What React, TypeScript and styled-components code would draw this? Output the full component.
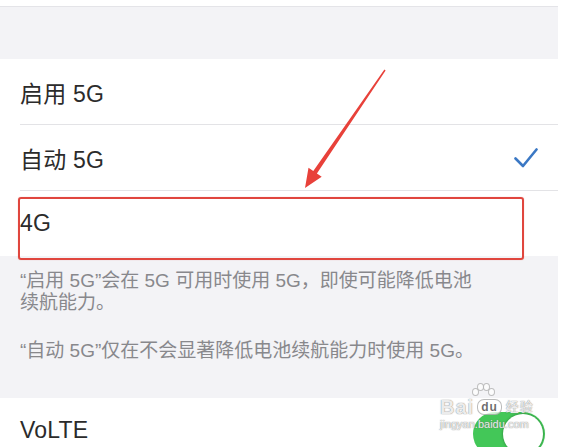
import React from "react";
import styled, { createGlobalStyle } from "styled-components";

const GlobalStyle = createGlobalStyle`
  html, body {
    margin: 0;
    padding: 0;
    background: #ffffff;
  }
  body {
    font-family: "Liberation Sans", "Noto Sans CJK SC", sans-serif;
    overflow: hidden;
  }
`;

interface Option {
  id: string;
  label: string;
  checked?: boolean;
  marked?: boolean;
}

const options: Option[] = [
  { id: "on", label: "启用 5G" },
  { id: "auto", label: "自动 5G", checked: true },
  { id: "4g", label: "4G", marked: true },
];

const notes = [
  "“启用 5G”会在 5G 可用时使用 5G，即使可能降低电池续航能力。",
  "“自动 5G”仅在不会显著降低电池续航能力时使用 5G。",
];

const CheckIcon = () => (
  <svg width="24" height="22" viewBox="0 0 24 22">
    <polyline
      points="1.5,11.5 9,19 22.5,2.5"
      fill="none"
      stroke="#3b78c4"
      strokeWidth="2.6"
      strokeLinecap="round"
      strokeLinejoin="round"
    />
  </svg>
);

const Arrow = () => (
  <ArrowLayer width="572" height="447" viewBox="0 0 572 447">
    <polygon
      points="385.6,70.4 316.9,173.4 321.7,176.7 305,188 308.5,167.7 313.3,170.9 384.4,69.6"
      fill="#e8413a"
    />
  </ArrowLayer>
);

export default function App() {
  return (
    <Page>
      <GlobalStyle />
      <Screen>
        <TopGap />
        <Group>
          {options.map((opt, i) => (
            <Row key={opt.id} last={i === options.length - 1}>
              <Label>{opt.label}</Label>
              {opt.checked && <CheckIcon />}
              {opt.marked && <Highlight />}
            </Row>
          ))}
        </Group>
        <Footer>
          {notes.map((n) => (
            <Note key={n}>{n}</Note>
          ))}
        </Footer>
        <Group>
          <Row last>
            <Label>VoLTE</Label>
            <Toggle>
              <Knob />
            </Toggle>
          </Row>
        </Group>
      </Screen>
      <Arrow />
      <Watermark>
        <Paw>
          <i />
          <i />
          <i />
          <i />
        </Paw>
        <MarkTop>
          Bai<Du>du</Du>
          <MarkCn>经验</MarkCn>
        </MarkTop>
        <MarkUrl>jingyan.baidu.com</MarkUrl>
      </Watermark>
    </Page>
  );
}

const Page = styled.div`
  position: relative;
  width: 572px;
  height: 447px;
  overflow: hidden;
  background: #ffffff;
`;

const Screen = styled.div`
  width: 558px;
  display: flex;
  flex-direction: column;
`;

const TopGap = styled.div`
  height: 52px;
  margin-top: 6px;
  background: #f3f3f6;
  border-top: 1px solid #e4e4e8;
`;

const Group = styled.div`
  background: #ffffff;
`;

const Row = styled.div<{ last?: boolean }>`
  position: relative;
  margin-left: 20px;
  padding-right: 20px;
  display: flex;
  align-items: center;
  justify-content: space-between;
  border-bottom: ${(p) => (p.last ? "none" : "1px solid #e3e3e6")};
  box-sizing: border-box;
  height: ${(p) => (p.last ? "65px" : "66px")};
`;

const Label = styled.span`
  font-size: 23px;
  color: #2b2b2b;
  letter-spacing: 0.2px;
`;

const Highlight = styled.div`
  position: absolute;
  left: -2px;
  right: 34px;
  top: 6px;
  bottom: -4px;
  border: 2px solid #e0463e;
  border-radius: 3px;
  box-shadow: 0 0 1px rgba(224, 70, 62, 0.5);
  pointer-events: none;
`;

const Footer = styled.div`
  background: #f3f3f6;
  padding: 14px 0 36px 20px;
  display: flex;
  flex-direction: column;
  gap: 26px;
`;

const Note = styled.p`
  margin: 0;
  width: 462px;
  font-size: 19px;
  line-height: 22px;
  color: #88888c;
`;

const Toggle = styled.div`
  width: 72px;
  height: 44px;
  margin-top: 6px;
  margin-right: -7px;
  border-radius: 22px;
  background: #43c758;
  display: flex;
  align-items: center;
  justify-content: flex-end;
  padding: 2px;
  box-sizing: border-box;
`;

const Knob = styled.div`
  width: 40px;
  height: 40px;
  border-radius: 50%;
  background: #ffffff;
  box-shadow: 0 0 2px 1px rgba(40, 120, 50, 0.45);
`;

const ArrowLayer = styled.svg`
  position: absolute;
  left: 0;
  top: 0;
  pointer-events: none;
`;

const Watermark = styled.div`
  position: absolute;
  left: 440px;
  top: 383px;
  width: 108px;
  display: flex;
  flex-direction: column;
  align-items: flex-start;
  font-family: "Liberation Sans", "Noto Sans CJK SC", sans-serif;
  color: rgba(255, 255, 255, 0.85);
  text-shadow: 0 0 1px rgba(120, 120, 120, 0.7), 0 0 1px rgba(120, 120, 120, 0.7);
  pointer-events: none;
`;

const Paw = styled.div`
  margin-left: 32px;
  width: 20px;
  height: 14px;
  position: relative;
  i {
    position: absolute;
    width: 5px;
    height: 6px;
    border-radius: 50%;
    border: 1px solid rgba(150, 150, 150, 0.6);
    background: rgba(255, 255, 255, 0.7);
  }
  i:nth-child(1) { left: 0; top: 5px; }
  i:nth-child(2) { left: 5px; top: 0; }
  i:nth-child(3) { left: 11px; top: 0; }
  i:nth-child(4) { left: 16px; top: 5px; }
`;

const MarkTop = styled.div`
  display: flex;
  align-items: center;
  font-size: 20px;
  font-weight: bold;
  line-height: 20px;
  letter-spacing: 1px;
`;

const Du = styled.span`
  font-size: 12px;
  line-height: 14px;
  margin-left: 3px;
  padding: 0 3px;
  border-radius: 7px;
  background: rgba(255, 255, 255, 0.75);
  color: rgba(60, 60, 60, 0.75);
  text-shadow: none;
  border: 1px solid rgba(120, 120, 120, 0.5);
`;

const MarkCn = styled.span`
  font-size: 13px;
  margin-left: 4px;
  font-weight: normal;
`;

const MarkUrl = styled.div`
  font-size: 11px;
  line-height: 13px;
  margin-top: 1px;
`;
